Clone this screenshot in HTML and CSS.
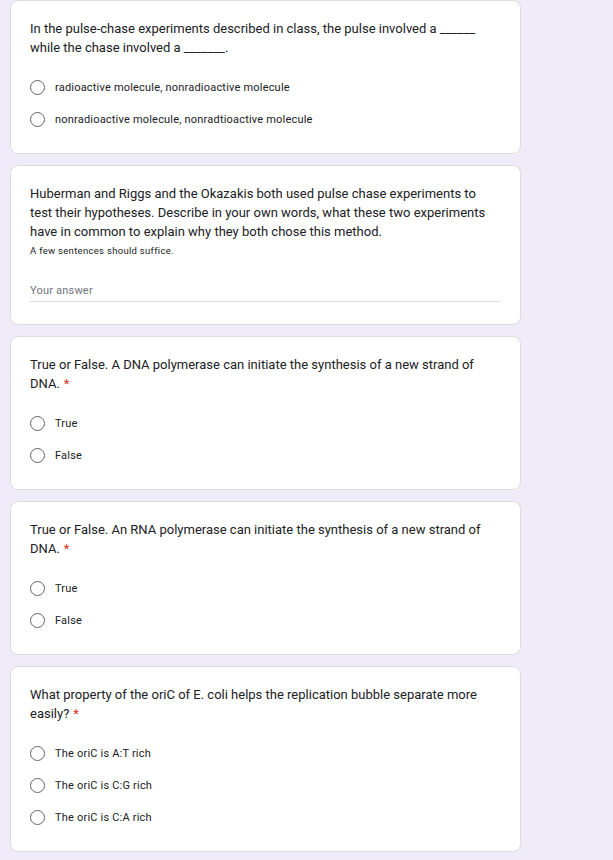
FILE: index.html
```html
<!DOCTYPE html>
<html>
<head>
<meta charset="utf-8">
<link rel="stylesheet" href="styles.css">
</head>
<body>
<div class="form">
  <div class="card">
    <div class="question">In the pulse-chase experiments described in class, the pulse involved a ______<br>while the chase involved a _______.</div>
    <div class="options">
      <div class="option"><span class="radio"></span><span class="label">radioactive molecule, nonradioactive molecule</span></div>
      <div class="option"><span class="radio"></span><span class="label">nonradioactive molecule, nonradtioactive molecule</span></div>
    </div>
  </div>

  <div class="card card-text">
    <div class="question">Huberman and Riggs and the Okazakis both used pulse chase experiments to test their hypotheses. Describe in your own words, what these two experiments have in common to explain why they both chose this method.</div>
    <div class="desc">A few sentences should suffice.</div>
    <div class="answer">Your answer</div>
  </div>

  <div class="card">
    <div class="question"><span>True or False. A DNA polymerase can initiate the synthesis of a new strand of DNA.</span><span class="req">*</span></div>
    <div class="options">
      <div class="option"><span class="radio"></span><span class="label">True</span></div>
      <div class="option"><span class="radio"></span><span class="label">False</span></div>
    </div>
  </div>

  <div class="card">
    <div class="question"><span>True or False. An RNA polymerase can initiate the synthesis of a new strand of DNA.</span><span class="req">*</span></div>
    <div class="options">
      <div class="option"><span class="radio"></span><span class="label">True</span></div>
      <div class="option"><span class="radio"></span><span class="label">False</span></div>
    </div>
  </div>

  <div class="card">
    <div class="question"><span>What property of the oriC of E. coli helps the replication bubble separate more easily?</span><span class="req">*</span></div>
    <div class="options">
      <div class="option"><span class="radio"></span><span class="label">The oriC is A:T rich</span></div>
      <div class="option"><span class="radio"></span><span class="label">The oriC is C:G rich</span></div>
      <div class="option"><span class="radio"></span><span class="label">The oriC is C:A rich</span></div>
    </div>
  </div>
</div>
</body>
</html>
```

FILE: styles.css
```css
html, body {
  margin: 0;
  padding: 0;
  background: #efebf8;
}

body {
  font-family: Roboto, "Liberation Sans", sans-serif;
  color: #202124;
}

.form {
  display: flex;
  flex-direction: column;
  gap: 11px;
  padding: 0 0 10px 10px;
  width: 511px;
}

.card {
  background: #ffffff;
  border: 1px solid #dadce0;
  border-radius: 8px;
  padding: 18px 19px 18px 19px;
}

.question {
  font-size: 13px;
  line-height: 19px;
  letter-spacing: 0;
  color: #202124;
}

.req {
  color: #d93025;
  margin-left: 4px;
}

.options {
  display: flex;
  flex-direction: column;
  margin-top: 14px;
}

.option {
  display: flex;
  align-items: center;
  height: 32px;
}

.radio {
  width: 15px;
  height: 15px;
  box-sizing: border-box;
  border: 1.5px solid #5f6368;
  border-radius: 50%;
  flex: none;
}

.label {
  margin-left: 10px;
  font-size: 11px;
  letter-spacing: 0.2px;
  color: #202124;
}

.desc {
  margin-top: 3px;
  font-size: 9.5px;
  line-height: 13px;
  letter-spacing: 0.3px;
  color: #202124;
}

.answer {
  margin-top: 24px;
  font-size: 11px;
  line-height: 20px;
  letter-spacing: 0.2px;
  color: #70757a;
  border-bottom: 1px solid #dadce0;
}

.card-text {
  padding-bottom: 22px;
}
```
